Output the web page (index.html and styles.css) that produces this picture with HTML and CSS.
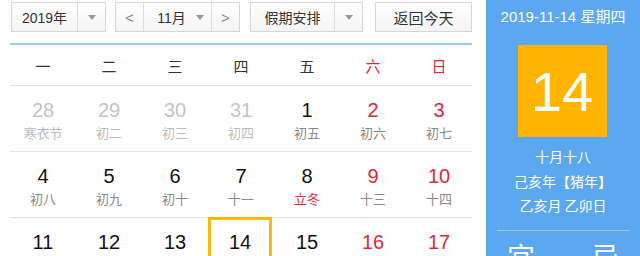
FILE: index.html
```html
<!DOCTYPE html>
<html lang="zh-CN">
<head>
	<meta charset="UTF-8">
	<title>万年历</title>
	<link rel="stylesheet" href="styles.css">
</head>
<body>

<div id="calendar">
	<div id="cal_main">
		<div class="toolbar">
			<div class="select year_sel"><span class="sel_text">2019年</span><span class="sel_arrow"><i class="caret"></i></span></div>
			<div class="month_group">
				<span class="nav_btn">&lt;</span>
				<div class="month_sel"><span class="sel_text">11月</span><i class="caret"></i></div>
				<span class="nav_btn">&gt;</span>
			</div>
			<div class="select holiday_sel"><span class="sel_text">假期安排</span><span class="sel_arrow"><i class="caret"></i></span></div>
			<div class="today_btn">返回今天</div>
		</div>

		<div class="week_head">
			<span>一</span><span>二</span><span>三</span><span>四</span><span>五</span><span class="wkend">六</span><span class="wkend">日</span>
		</div>

		<div class="days">
			<div class="day other"><b>28</b><em>寒衣节</em></div>
			<div class="day other"><b>29</b><em>初二</em></div>
			<div class="day other"><b>30</b><em>初三</em></div>
			<div class="day other"><b>31</b><em>初四</em></div>
			<div class="day"><b>1</b><em>初五</em></div>
			<div class="day wkend"><b>2</b><em>初六</em></div>
			<div class="day wkend"><b>3</b><em>初七</em></div>

			<div class="day"><b>4</b><em>初八</em></div>
			<div class="day"><b>5</b><em>初九</em></div>
			<div class="day"><b>6</b><em>初十</em></div>
			<div class="day"><b>7</b><em>十一</em></div>
			<div class="day"><b>8</b><em class="term">立冬</em></div>
			<div class="day wkend"><b>9</b><em>十三</em></div>
			<div class="day wkend"><b>10</b><em>十四</em></div>

			<div class="day"><b>11</b><em>十五</em></div>
			<div class="day"><b>12</b><em>十六</em></div>
			<div class="day"><b>13</b><em>十七</em></div>
			<div class="day today"><b>14</b><em>十八</em></div>
			<div class="day"><b>15</b><em>十九</em></div>
			<div class="day wkend"><b>16</b><em>二十</em></div>
			<div class="day wkend"><b>17</b><em>廿一</em></div>
		</div>
	</div>

	<div id="cal_side">
		<p class="side_date">2019-11-14 星期四</p>
		<div class="side_day">14</div>
		<p class="side_lunar">十月十八<br>己亥年【猪年】<br>乙亥月 乙卯日</p>
		<div class="side_line"></div>
		<div class="side_yiji"><span>宜</span><span>忌</span></div>
	</div>
</div>

</body>
</html>
```

FILE: styles.css
```css
html, body {
	margin: 0;
	padding: 0;
	background-color: #fff;
	overflow: hidden;
}

#calendar {
	display: flex;
	width: 640px;
	height: 256px;
	font-family: "Liberation Sans", "Noto Sans CJK SC", sans-serif;
}

#cal_main {
	width: 462px;
	margin-left: 10px;
}

/* top controls */
.toolbar {
	display: flex;
	height: 30px;
	margin-top: 2px;
	margin-left: 1px;
	font-size: 14px;
	color: #333;
}

.select, .month_group, .today_btn {
	display: flex;
	box-sizing: border-box;
	height: 30px;
	border: 1px solid #d6d6d6;
	background: linear-gradient(#fff, #f4f4f4);
}

.sel_text {
	display: flex;
	align-items: center;
	justify-content: center;
	flex: 1;
}

.sel_arrow {
	display: flex;
	align-items: center;
	justify-content: center;
	width: 27px;
	border-left: 1px solid #dcdcdc;
}

.caret {
	display: inline-block;
	width: 0;
	height: 0;
	border-left: 4px solid transparent;
	border-right: 4px solid transparent;
	border-top: 5px solid #999;
}

.year_sel {
	width: 95px;
}

.month_group {
	width: 125px;
	margin-left: 9px;
}

.nav_btn {
	display: flex;
	align-items: center;
	justify-content: center;
	width: 27px;
	color: #888;
	font-size: 15px;
}

.month_sel {
	display: flex;
	align-items: center;
	justify-content: center;
	gap: 10px;
	flex: 1;
	border-left: 1px solid #dcdcdc;
	border-right: 1px solid #dcdcdc;
	padding-left: 6px;
}

.month_sel .sel_text {
	flex: none;
}

.holiday_sel {
	width: 113px;
	margin-left: 10px;
}

.today_btn {
	width: 97px;
	margin-left: 12px;
	align-items: center;
	justify-content: center;
	font-size: 15px;
}

/* week header */
.week_head {
	display: grid;
	grid-template-columns: repeat(7, 66px);
	height: 40px;
	margin-top: 11px;
	border-top: 2px solid #9ccbee;
	border-bottom: 1px solid #e2e2e2;
	font-family: "Noto Sans CJK SC", sans-serif;
	font-size: 15px;
	color: #333;
}

.week_head span {
	display: flex;
	align-items: center;
	justify-content: center;
}

.week_head .wkend {
	color: #e0283c;
}

/* days */
.days {
	display: grid;
	grid-template-columns: repeat(7, 66px);
	grid-auto-rows: 66px;
}

.day {
	display: flex;
	flex-direction: column;
	align-items: center;
	box-sizing: border-box;
	border-bottom: 1px solid #e2e2e2;
	padding-top: 13px;
}

.day b {
	font-weight: normal;
	font-size: 20px;
	line-height: 22px;
	color: #111;
}

.day em {
	font-style: normal;
	font-family: "Noto Sans CJK SC", sans-serif;
	font-size: 13px;
	line-height: 20px;
	margin-top: 2px;
	color: #888;
}

.day.other b {
	color: #c4c4c4;
}

.day.other em {
	color: #bbb;
}

.day.wkend b {
	color: #e0283c;
}

.day em.term {
	color: #e0283c;
}

.day.today {
	border: 3px solid #f9b90f;
	width: 64px;
	margin-top: -1px;
	padding-top: 11px;
}

/* side panel */
#cal_side {
	display: flex;
	flex-direction: column;
	align-items: center;
	flex-shrink: 0;
	width: 154px;
	margin-left: 14px;
	background-color: #5ba8f1;
	color: #fff;
}

#cal_side > * {
	flex-shrink: 0;
}

.side_date {
	margin: 8px 0 0;
	font-size: 15px;
	line-height: 18px;
}

.side_day {
	display: flex;
	align-items: center;
	justify-content: center;
	width: 89px;
	height: 92px;
	margin-top: 19px;
	margin-right: 2px;
	background-color: #ffb401;
	font-size: 56px;
}

.side_lunar {
	margin: 7px 0 0;
	font-family: "Noto Sans CJK SC", sans-serif;
	font-size: 14px;
	line-height: 24.5px;
	text-align: center;
}

.side_line {
	width: 133px;
	height: 1px;
	margin-top: 12px;
	background-color: #9fcaf5;
}

.side_yiji {
	display: flex;
	gap: 56px;
	margin-top: 8px;
	font-family: "Noto Sans CJK SC", sans-serif;
	font-size: 28px;
	line-height: 34px;
}
```
